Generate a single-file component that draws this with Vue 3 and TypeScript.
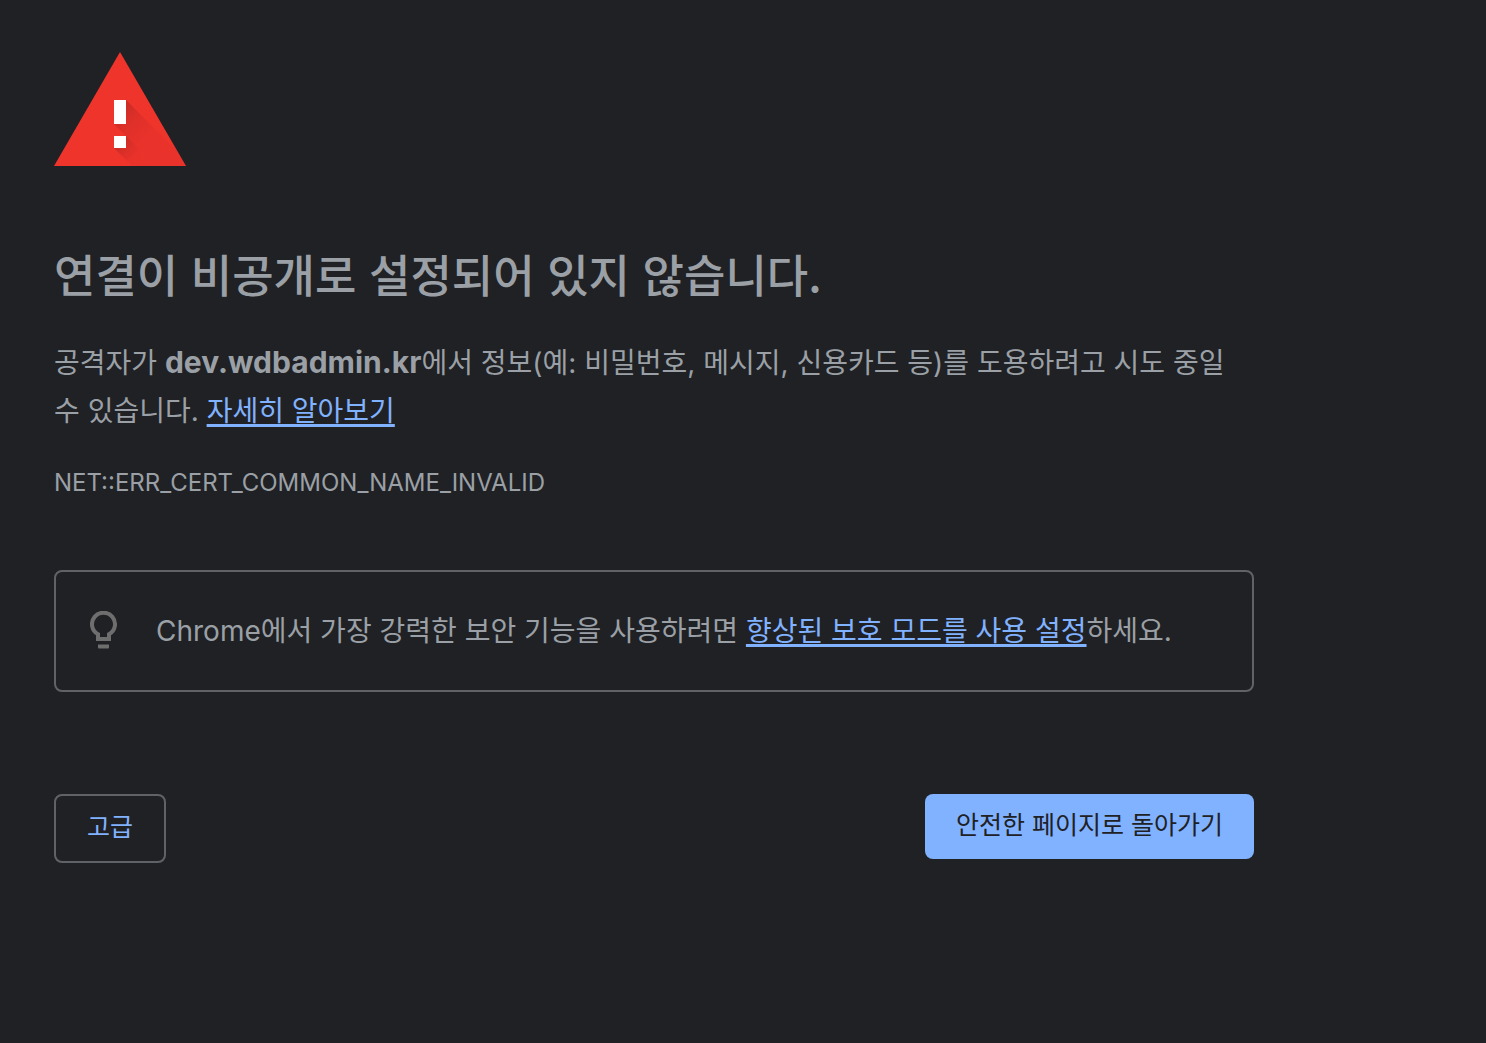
<script setup lang="ts">
import { ref } from 'vue'

const host = ref<string>('dev.wdbadmin.kr')
const errorCode = ref<string>('NET::ERR_CERT_COMMON_NAME_INVALID')
</script>

<template>
  <main class="interstitial" lang="ko">
    <svg class="warning-icon" viewBox="0 0 132 114" role="img" aria-label="경고">
      <defs>
        <linearGradient id="bar-shade" gradientUnits="userSpaceOnUse" x1="60" y1="54" x2="92" y2="86">
          <stop offset="0" stop-color="#8e1f1f" stop-opacity="0.5" />
          <stop offset="0.5" stop-color="#a82222" stop-opacity="0.25" />
          <stop offset="1" stop-color="#c42828" stop-opacity="0.16" />
        </linearGradient>
        <linearGradient id="dot-shade" gradientUnits="userSpaceOnUse" x1="62" y1="86" x2="81" y2="105">
          <stop offset="0" stop-color="#8e1f1f" stop-opacity="0.5" />
          <stop offset="1" stop-color="#a82222" stop-opacity="0.08" />
        </linearGradient>
        <clipPath id="triangle"><path d="M66 0 132 114H0Z" /></clipPath>
      </defs>
      <path d="M66 0 132 114H0Z" fill="#ef342b" />
      <g clip-path="url(#triangle)">
        <path d="M72 48 138 114H102L60 72Z" fill="url(#bar-shade)" />
        <path d="M72 84 102 114H78L60 96Z" fill="url(#dot-shade)" />
      </g>
      <path d="M60 48h12v24H60zM60 84h12v12H60z" fill="#fff" />
    </svg>

    <h1>연결이 비공개로 설정되어 있지 않습니다.</h1>

    <p class="message">
      공격자가 <strong>{{ host }}</strong>에서 정보(예: 비밀번호, 메시지, 신용카드 등)를 도용하려고 시도 중일 수 있습니다.
      <a href="#learn-more">자세히 알아보기</a>
    </p>

    <p class="error-code">{{ errorCode }}</p>

    <section class="promo">
      <svg class="bulb" viewBox="0 0 28 40" aria-hidden="true">
        <path d="M8 28V23.3A11.5 11.5 0 1 1 19 23.3V28Z" fill="none" stroke="#6e6e6e" stroke-width="4" />
        <path d="M8 33.6h11v3a1 1 0 0 1-1 1H9a1 1 0 0 1-1-1z" fill="#6e6e6e" />
      </svg>
      <p>Chrome에서 가장 강력한 보안 기능을 사용하려면 <a href="#enhanced-protection">향상된 보호 모드를 사용 설정</a>하세요.</p>
    </section>

    <div class="actions">
      <button type="button" class="secondary">고급</button>
      <button type="button" class="primary">안전한 페이지로 돌아가기</button>
    </div>
  </main>
</template>

<style>
body {
  margin: 0;
  background: #202124;
}
</style>

<style scoped>
.interstitial {
  max-width: 1200px;
  margin: 0 54px;
  padding: 52px 0;
  color: #9aa0a6;
  font-family: Inter, "Noto Sans CJK KR", sans-serif;
  font-size: 28px;
  font-weight: 400;
  line-height: 48px;
}

.warning-icon {
  display: block;
  width: 132px;
  height: 114px;
}

h1 {
  margin: 78px 0 34px;
  font-family: "Noto Sans CJK KR", sans-serif;
  font-size: 45px;
  font-weight: 500;
  line-height: 60px;
}

p {
  margin: 0;
}

strong {
  font-size: 30px;
  font-weight: 700;
}

a {
  color: #81b2ff;
  text-decoration: underline;
  text-decoration-thickness: 3px;
  text-underline-offset: 3px;
  text-decoration-skip-ink: none;
}

.error-code {
  margin-top: 32px;
  font-size: 24px;
  line-height: 32px;
}

.promo {
  display: flex;
  align-items: center;
  gap: 38px;
  margin-top: 71px;
  padding: 35px 34px;
  border: 2px solid #5f6368;
  border-radius: 8px;
}

.bulb {
  flex: none;
  width: 28px;
  height: 40px;
}

.actions {
  display: flex;
  align-items: flex-start;
  justify-content: space-between;
  margin-top: 102px;
}

button {
  padding: 13px 31px 19px;
  border: 0;
  border-radius: 8px;
  font-family: "Noto Sans CJK KR", sans-serif;
  font-size: 25px;
  line-height: 33px;
  cursor: pointer;
}

.secondary {
  border: 2px solid #5f6368;
  background: transparent;
  color: #81b2ff;
}

.primary {
  background: #81b2ff;
  color: #202124;
}
</style>
